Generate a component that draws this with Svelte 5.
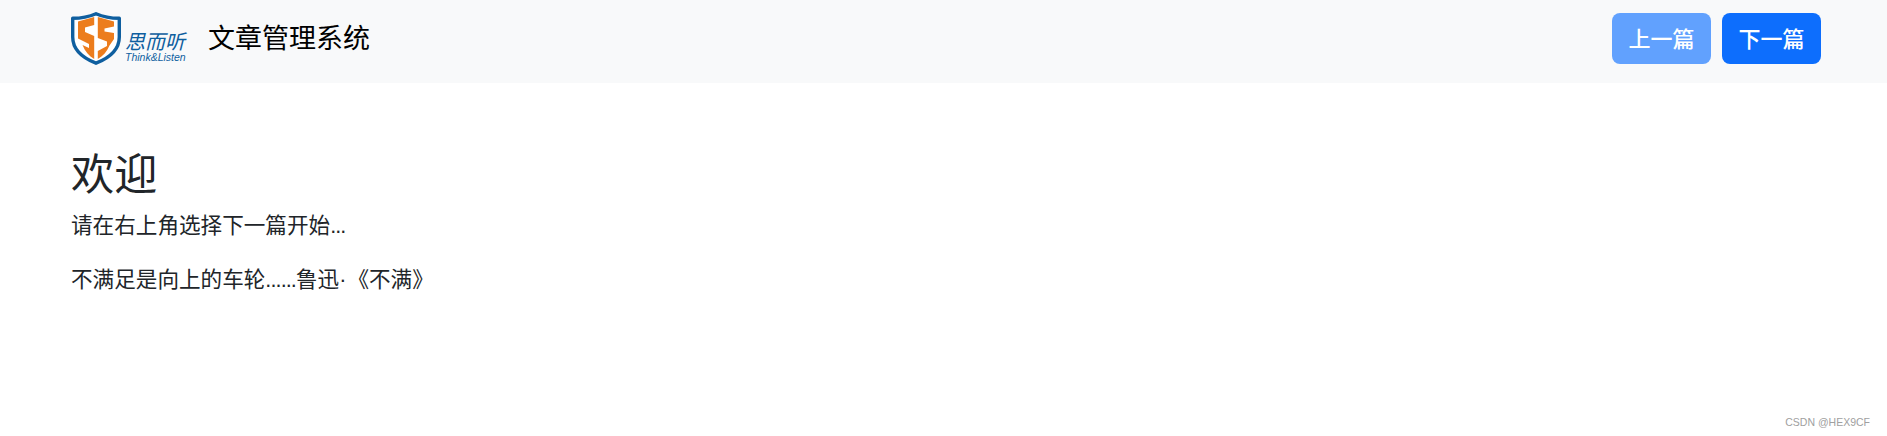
<script lang="ts">
  // two S shapes side by side inside the shield
  const leftS = "M7 9.5 L23.2 5 L23.2 13 L14 15.5 L14 20 L23.2 24 L23.2 47 C18 44 14 39.5 11.5 33 L18 36 L18 32 L7 26.5 Z";
  const rightS = "M26.8 5 L43 9.5 L43 14.5 L33.5 16.5 L33.5 19.5 L43 21 L43 27 L38.5 33.5 C36 39.5 32 44 26.8 47 L26.8 39 L36 34 L36 29.5 L26.8 26 Z";
</script>

<div class="page">
  <nav class="navbar">
    <div class="brand">
      <div class="logo">
        <svg class="shield" width="50" height="53" viewBox="0 0 50 53">
          <path d="M25 1.7 C32 4.8 40 6.3 48.3 6.3 L48.3 25 C48.3 38 37 46.5 25 51.2 C13 46.5 1.7 38 1.7 25 L1.7 6.3 C10 6.3 18 4.8 25 1.7 Z" fill="#fff" stroke="#0f5f9f" stroke-width="3.4" stroke-linejoin="round"/>
          <path d={leftS} fill="#ec7d1e"/>
          <path d={rightS} fill="#ec7d1e"/>
        </svg>
        <div class="wordmark">
          <span class="cn">思而听</span>
          <span class="en">Think&amp;Listen</span>
        </div>
      </div>
      <span class="title">文章管理系统</span>
    </div>
    <div class="actions">
      <button class="btn prev">上一篇</button>
      <button class="btn">下一篇</button>
    </div>
  </nav>

  <main class="content">
    <h2>欢迎</h2>
    <p>请在右上角选择下一篇开始<span class="tight">...</span></p>
    <p>不满足是向上的车轮<span class="tight">......</span>鲁迅<span class="dot">·</span>《不满》</p>
  </main>

  <span class="mark">CSDN @HEX9CF</span>
</div>

<style>
  :global(body) {
    margin: 0;
    background: #fff;
    font-family: "Liberation Sans", "Noto Sans CJK SC", sans-serif;
    text-spacing-trim: space-all;
  }

  .page {
    position: relative;
    height: 436px;
    overflow: hidden;
    color: #212529;
  }

  .navbar {
    display: flex;
    align-items: flex-start;
    justify-content: space-between;
    height: 83px;
    box-sizing: border-box;
    padding: 12px 66px 0 71px;
    background: #f8f9fa;
  }

  .brand {
    display: flex;
    align-items: center;
    gap: 21px;
  }

  .logo {
    display: flex;
    align-items: flex-start;
    gap: 4px;
    width: 116px;
    height: 53px;
  }

  .shield {
    flex: none;
  }

  .wordmark {
    display: flex;
    flex-direction: column;
    padding-top: 20px;
    color: #0f5f9f;
    font-style: italic;
  }

  .cn {
    font-size: 20px;
    line-height: 20px;
  }

  .en {
    font-size: 10.5px;
    line-height: 10px;
    white-space: nowrap;
  }

  .title {
    font-size: 27px;
    line-height: 32px;
    margin-top: 1px;
    color: #000;
  }

  .actions {
    display: flex;
    gap: 11px;
    margin-top: 1px;
  }

  .btn {
    width: 99px;
    height: 51px;
    padding: 0 0 4px;
    border: none;
    border-radius: 8px;
    background: #0d6efd;
    color: #fff;
    font-family: inherit;
    font-size: 22px;
    font-weight: 500;
  }

  .prev {
    background: #61a1fe;
  }

  .content {
    padding: 67px 71px 0;
  }

  h2 {
    margin: 0 0 8px;
    font-size: 43.2px;
    font-weight: 400;
    line-height: 51.8px;
  }

  p {
    margin: 0 0 21.6px;
    font-size: 21.6px;
    line-height: 32.4px;
  }

  .tight {
    letter-spacing: -0.9px;
  }

  .dot {
    letter-spacing: 1px;
  }

  .mark {
    position: absolute;
    right: 17px;
    bottom: 8px;
    font-size: 10.5px;
    color: #a0a0a0;
  }
</style>
